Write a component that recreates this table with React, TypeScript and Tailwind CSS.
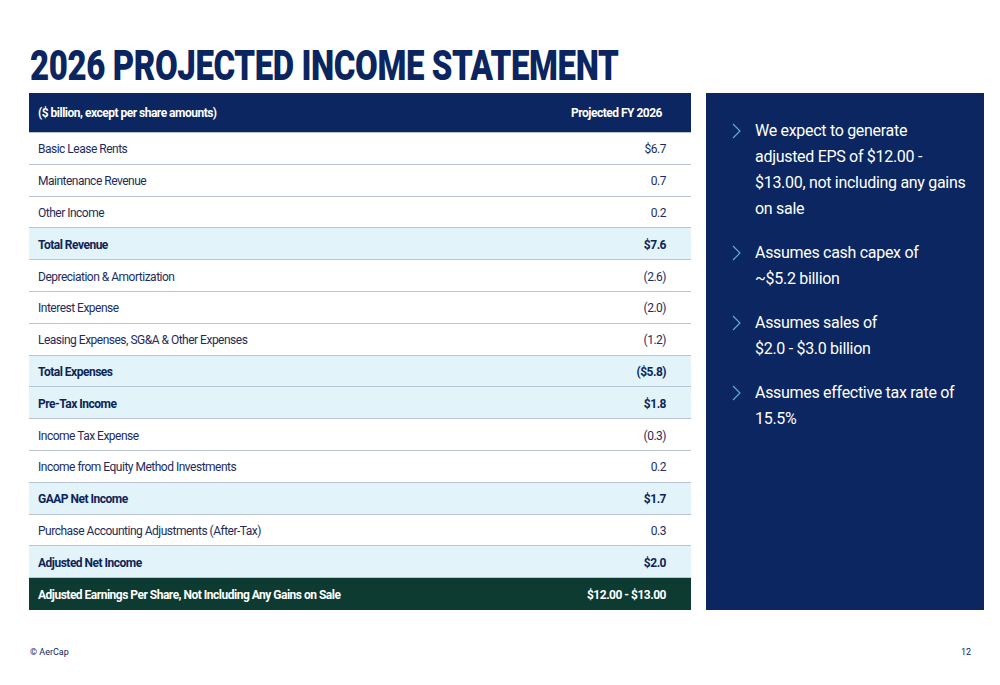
const rows: { label: string; value: string; kind?: "total" | "final" }[] = [
  { label: "Basic Lease Rents", value: "$6.7" },
  { label: "Maintenance Revenue", value: "0.7" },
  { label: "Other Income", value: "0.2" },
  { label: "Total Revenue", value: "$7.6", kind: "total" },
  { label: "Depreciation & Amortization", value: "(2.6)" },
  { label: "Interest Expense", value: "(2.0)" },
  { label: "Leasing Expenses, SG&A & Other Expenses", value: "(1.2)" },
  { label: "Total Expenses", value: "($5.8)", kind: "total" },
  { label: "Pre-Tax Income", value: "$1.8", kind: "total" },
  { label: "Income Tax Expense", value: "(0.3)" },
  { label: "Income from Equity Method Investments", value: "0.2" },
  { label: "GAAP Net Income", value: "$1.7", kind: "total" },
  { label: "Purchase Accounting Adjustments (After-Tax)", value: "0.3" },
  { label: "Adjusted Net Income", value: "$2.0", kind: "total" },
  {
    label: "Adjusted Earnings Per Share, Not Including Any Gains on Sale",
    value: "$12.00 - $13.00",
    kind: "final",
  },
];

// each bullet split into the lines it shows on the slide
const bullets = [
  ["We expect to generate", "adjusted EPS of $12.00 -", "$13.00, not including any gains", "on sale"],
  ["Assumes cash capex of", "~$5.2 billion"],
  ["Assumes sales of", "$2.0 - $3.0 billion"],
  ["Assumes effective tax rate of", "15.5%"],
];

function Chevron() {
  return (
    <svg width="9" height="16" viewBox="0 0 9 16" className="mt-[5px] shrink-0">
      <path d="M1 1 L8 8 L1 15" fill="none" stroke="#62b0dc" strokeWidth="1.1" />
    </svg>
  );
}

function Row({ label, value, kind }: { label: string; value: string; kind?: string }) {
  const base =
    "flex items-center justify-between h-[31.8px] pt-[2px] pl-[9px] pr-[25px] text-[12px] tracking-[-0.5px]";
  if (kind === "final") {
    return (
      <div className={`${base} bg-[#0e3b31] text-white font-bold`}>
        <span>{label}</span>
        <span>{value}</span>
      </div>
    );
  }
  if (kind === "total") {
    return (
      <div className={`${base} bg-[#e2f3f9] text-[#0c2558] font-bold border-b border-[#b9c5d4]`}>
        <span>{label}</span>
        <span>{value}</span>
      </div>
    );
  }
  return (
    <div className={`${base} bg-white text-[#1c2c5c] border-b border-[#b9c5d4]`}>
      <span>{label}</span>
      <span>{value}</span>
    </div>
  );
}

export default function App() {
  return (
    <div
      className="w-[1000px] h-[685px] bg-white flex flex-col"
      style={{ fontFamily: "Roboto, 'Liberation Sans', sans-serif" }}
    >
      <h1 className="mt-[45px] ml-[30px] text-[42px] leading-[42px] font-black text-[#0b2560] tracking-[-0.5px] whitespace-nowrap">
        <span className="inline-block origin-left scale-x-[0.785]">2026 PROJECTED INCOME STATEMENT</span>
      </h1>

      <div className="flex mt-[6px] ml-[29px]">
        <div className="w-[662px] flex flex-col">
          <div className="flex items-center justify-between h-[40px] bg-[#0b2660] text-white font-bold text-[12px] tracking-[-0.5px] pl-[9px] pr-[29px] border-b border-[#b9c5d4]">
            <span>($ billion, except per share amounts)</span>
            <span>Projected FY 2026</span>
          </div>
          {rows.map((r) => (
            <Row key={r.label} {...r} />
          ))}
        </div>

        <div className="w-[278px] ml-[15px] bg-[#0b2660] pt-[25px] pl-[26px] pr-[8px] flex flex-col gap-[18px]">
          {bullets.map((lines) => (
            <div key={lines[0]} className="flex gap-[14px]">
              <Chevron />
              <p className="text-white text-[16px] leading-[26px] tracking-[-0.3px] whitespace-nowrap">
                {lines.map((l, i) => (
                  <span key={i} className="block">
                    {l}
                  </span>
                ))}
              </p>
            </div>
          ))}
        </div>
      </div>

      <div className="flex justify-between mt-auto mb-[26px] ml-[30px] mr-[29px] text-[9px] text-[#0b2560]">
        <span>© AerCap</span>
        <span>12</span>
      </div>
    </div>
  );
}
